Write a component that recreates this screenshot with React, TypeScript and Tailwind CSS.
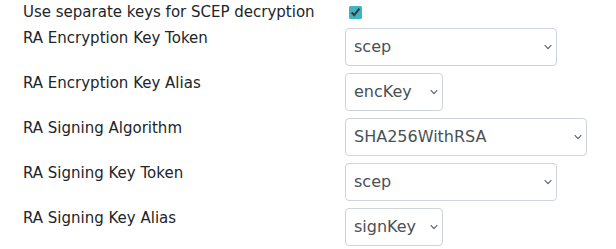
import React, { useState } from 'react';

type Field = {
  label: string;
  value: string;
  options: string[];
  width: string;
};

const FIELDS: Field[] = [
  { label: 'RA Encryption Key Token', value: 'scep', options: ['scep', 'default'], width: 'w-[212px]' },
  { label: 'RA Encryption Key Alias', value: 'encKey', options: ['encKey', 'signKey'], width: 'w-[98px]' },
  { label: 'RA Signing Algorithm', value: 'SHA256WithRSA', options: ['SHA256WithRSA', 'SHA1WithRSA', 'SHA512WithRSA'], width: 'w-[242px]' },
  { label: 'RA Signing Key Token', value: 'scep', options: ['scep', 'default'], width: 'w-[212px]' },
  { label: 'RA Signing Key Alias', value: 'signKey', options: ['signKey', 'encKey'], width: 'w-[98px]' },
];

const Chevron = () => (
  <svg
    className="pointer-events-none absolute right-[5px] top-1/2 -translate-y-1/2"
    width="8"
    height="5"
    viewBox="0 0 8 5"
    fill="none"
  >
    <path d="M0.7 0.7 L4 4.1 L7.3 0.7" stroke="#5a5f64" strokeWidth="1.1" />
  </svg>
);

const Select = ({ f }: { f: Field }) => {
  const [val, setVal] = useState(f.value);
  return (
    <div className={`relative h-[38px] ${f.width}`}>
      <select
        value={val}
        onChange={(e) => setVal(e.target.value)}
        className="h-full w-full appearance-none rounded-[4px] border border-[#ced4da] bg-white pl-[8px] pr-[20px] text-[16px] text-[#495057] focus:outline-none"
      >
        {f.options.map((o) => (
          <option key={o} value={o}>{o}</option>
        ))}
      </select>
      <Chevron />
    </div>
  );
};

export default function App() {
  const [separate, setSeparate] = useState(true);

  return (
    <div className="min-h-screen bg-white pl-[23px] pt-[2px] font-['DejaVu_Sans',sans-serif] text-[15px] leading-[1.45] text-[#212529]">
      <div className="flex h-[26px]">
        <div className="w-[322px]">Use separate keys for SCEP decryption</div>
        <div className="flex h-[21px] items-center">
          <input
            type="checkbox"
            checked={separate}
            onChange={(e) => setSeparate(e.target.checked)}
            className="ml-[4px] h-[13px] w-[13px] accent-[#3db5c5]"
          />
        </div>
      </div>
      {FIELDS.map((f) => (
        <div key={f.label} className="mb-[7px] flex">
          <div className="w-[322px]">{f.label}</div>
          <Select f={f} />
        </div>
      ))}
    </div>
  );
}
